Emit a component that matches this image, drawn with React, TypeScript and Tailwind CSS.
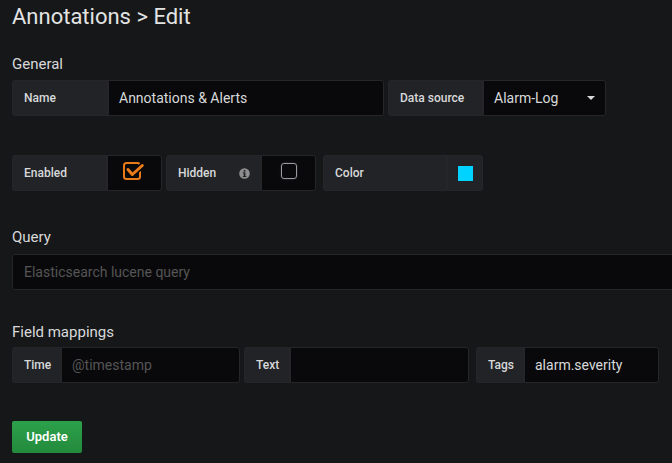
import React from 'react';

const labelCls =
  'flex items-center h-full pl-[11px] text-[12px] font-medium text-[#d8d9da] bg-[#212327] border border-[#262628] rounded-l-[3px]';
const inputBase =
  'flex items-center h-full pl-[10px] text-[14px] bg-[#09090b] border border-[#262628] rounded-r-[3px]';
const inputCls = `${inputBase} text-[#d8d9da]`;
const placeholderCls = `${inputBase} text-[#555555]`;

function CheckedBox() {
  return (
    <svg width="22" height="18" viewBox="0 0 22 18" className="-mt-[4px] ml-[-2px]">
      <rect x="1" y="1" width="16" height="16" rx="2.5" fill="none" stroke="#eb7b18" strokeWidth="2" />
      <polyline points="5,7.5 9.3,12.5 19.3,3.5" fill="none" stroke="#09090b" strokeWidth="6" strokeLinecap="round" strokeLinejoin="round" />
      <polyline points="5,7.5 9.3,12.5 19.3,3.5" fill="none" stroke="#eb7b18" strokeWidth="3" strokeLinecap="round" strokeLinejoin="round" />
    </svg>
  );
}

function EmptyBox() {
  return <div className="-mt-[4px] w-[16px] h-[16px] rounded-[3px] border-[1.5px] border-[#9a9b9d] shadow-[0_0_2px_rgba(160,170,190,0.35)]" />;
}

function InfoIcon() {
  return (
    <svg width="11" height="11" viewBox="0 0 11 11">
      <circle cx="5.5" cy="5.5" r="5.3" fill="#8e8e8e" />
      <rect x="4.7" y="2" width="1.7" height="1.6" fill="#212327" />
      <rect x="4.7" y="4.3" width="1.7" height="4.6" fill="#212327" />
      <rect x="3.8" y="4.3" width="1.2" height="1" fill="#212327" />
      <rect x="3.8" y="8" width="3.5" height="1" fill="#212327" />
    </svg>
  );
}

function Heading({ children, className = '' }: { children: React.ReactNode; className?: string }) {
  return <div className={`text-[15px] leading-[18px] text-[#d8d9da] ${className}`}>{children}</div>;
}

export default function App() {
  return (
    <div className="w-[672px] h-[463px] overflow-hidden bg-[#161719] pl-[12px] font-['Roboto','Liberation_Sans',sans-serif]">
      <h1 className="pt-[4px] text-[22px] leading-[26px] text-[#e3e3e3]">Annotations &gt; Edit</h1>

      <Heading className="mt-[25px]">General</Heading>
      <div className="mt-[7px] flex h-[36px]">
        <div className={`${labelCls} w-[96px]`}>Name</div>
        <div className={`${inputCls} w-[276px]`}>Annotations &amp; Alerts</div>
        <div className={`${labelCls} w-[95px] ml-[4px]`}>Data source</div>
        <div className={`${inputCls} w-[123px] justify-between pr-[10px]`}>
          <span>Alarm-Log</span>
          <span className="w-0 h-0 border-l-[4px] border-r-[4px] border-t-[4px] border-l-transparent border-r-transparent border-t-[#d8d9da]" />
        </div>
      </div>

      <div className="mt-[39px] flex h-[36px]">
        <div className={`${labelCls} w-[95px]`}>Enabled</div>
        <div className="flex items-center justify-center w-[55px] h-full bg-[#09090b] border border-[#262628] rounded-r-[3px]">
          <CheckedBox />
        </div>
        <div className={`${labelCls} w-[95px] ml-[4px] justify-between pr-[10px]`}>
          <span>Hidden</span>
          <InfoIcon />
        </div>
        <div className="flex items-center justify-center w-[55px] h-full bg-[#09090b] border border-[#262628] rounded-r-[3px]">
          <EmptyBox />
        </div>
        <div className={`${labelCls} w-[124px] ml-[7px]`}>Color</div>
        <div className="flex items-center justify-center w-[36px] h-full bg-[#212327] border border-[#262628] rounded-r-[3px]">
          <div className="w-[15px] h-[15px] bg-[#00d3ff]" />
        </div>
      </div>

      <Heading className="mt-[37px]">Query</Heading>
      <div className="mt-[8px] flex h-[36px]">
        <div className="flex shrink-0 items-center w-[700px] h-full pl-[11px] text-[14px] text-[#555555] bg-[#09090b] border border-[#262628] rounded-[3px]">
          Elasticsearch lucene query
        </div>
      </div>

      <Heading className="mt-[33px]">Field mappings</Heading>
      <div className="mt-[6px] flex h-[36px]">
        <div className={`${labelCls} w-[49px]`}>Time</div>
        <div className={`${placeholderCls} w-[179px]`}>@timestamp</div>
        <div className={`${labelCls} w-[46px] ml-[4px]`}>Text</div>
        <div className={`${inputCls} w-[179px]`} />
        <div className={`${labelCls} w-[48px] ml-[7px]`}>Tags</div>
        <div className={`${inputCls} w-[135px]`}>alarm.severity</div>
      </div>

      <button className="mt-[38px] w-[70px] h-[32px] rounded-[2px] bg-gradient-to-b from-[#2ca14b] to-[#238a3c] text-white text-[13px] font-semibold">
        Update
      </button>
    </div>
  );
}
